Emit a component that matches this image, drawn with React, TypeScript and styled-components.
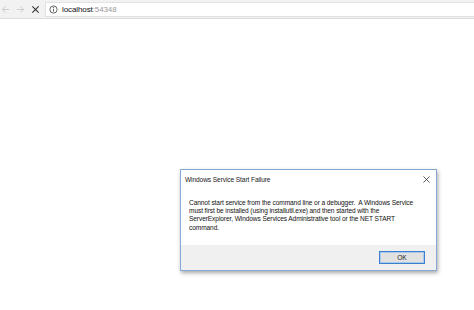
import React from "react";
import styled, { createGlobalStyle } from "styled-components";

const GlobalStyle = createGlobalStyle`
  html, body {
    margin: 0;
    padding: 0;
    background: #ffffff;
  }
  body {
    font-family: "Liberation Sans", Arial, sans-serif;
    width: 474px;
    height: 310px;
    overflow: hidden;
  }
`;

const Page = styled.div`
  display: flex;
  flex-direction: column;
  width: 474px;
  height: 310px;
  background: #fff;
`;

const Toolbar = styled.div`
  display: flex;
  align-items: center;
  height: 17px;
  padding-top: 1px;
  background: #f2f2f2;
  border-bottom: 1px solid #dcdcdc;
`;

const NavGroup = styled.div`
  display: flex;
  align-items: center;
  width: 47px;
  margin-left: -2px;
`;

const NavButton = styled.div<{ $dim?: boolean }>`
  width: 15px;
  height: 15px;
  display: flex;
  align-items: center;
  justify-content: center;
  color: ${(p) => (p.$dim ? "#c8c8c8" : "#333")};
`;

const AddressBar = styled.div`
  flex: 1;
  display: flex;
  align-items: center;
  gap: 4px;
  height: 13px;
  padding-left: 3px;
  background: #fff;
  border: 1px solid #e2e2e2;
  border-right: none;
`;

const Host = styled.span`
  font-family: "Liberation Sans", Arial, sans-serif;
  font-size: 8px;
  color: #111;
  letter-spacing: -0.1px;
`;

const Port = styled.span`
  color: #9a9a9a;
`;

const Stage = styled.div`
  flex: 1;
  display: flex;
  align-items: flex-start;
  padding: 150px 0 0 180px;
`;

const Dialog = styled.div`
  width: 255px;
  display: flex;
  flex-direction: column;
  background: #fff;
  border: 1px solid #86a9d6;
  box-shadow: 1px 2px 4px rgba(0, 0, 0, 0.35);
`;

const TitleBar = styled.div`
  display: flex;
  align-items: center;
  justify-content: space-between;
  height: 16px;
  padding: 1px 6px 0 4px;
`;

const Title = styled.span`
  font-size: 6.6px;
  letter-spacing: -0.1px;
  color: #1a1a1a;
`;

const CloseGlyph = styled.div`
  width: 8px;
  height: 8px;
  display: flex;
  align-items: center;
  justify-content: center;
`;

const Body = styled.div`
  display: flex;
  flex-direction: column;
  padding: 12px 8px 13px 8px;
  height: 33px;
`;

const Line = styled.div`
  font-size: 6.6px;
  line-height: 8.2px;
  letter-spacing: -0.1px;
  color: #111;
  white-space: pre;
`;

const Footer = styled.div`
  display: flex;
  justify-content: flex-end;
  align-items: center;
  height: 25px;
  padding-right: 11px;
  background: #f0f0f0;
`;

const OkButton = styled.button`
  width: 46px;
  height: 13px;
  padding: 0;
  font-family: "Liberation Sans", Arial, sans-serif;
  font-size: 6.6px;
  color: #222;
  background: #e1e1e1;
  border: 1px solid #3c7fcf;
  box-shadow: inset 0 0 0 1px #a9c8ee;
`;

const lines = [
  "Cannot start service from the command line or a debugger.  A Windows Service",
  "must first be installed (using installutil.exe) and then started with the",
  "ServerExplorer, Windows Services Administrative tool or the NET START",
  "command.",
];

export default function App() {
  return (
    <>
      <GlobalStyle />
      <Page>
        <Toolbar>
          <NavGroup>
            <NavButton $dim>
              <svg width="9" height="9" viewBox="0 0 10 10" fill="none" stroke="currentColor" strokeWidth="1">
                <path d="M9 5H1.5M5 1.5L1.5 5 5 8.5" />
              </svg>
            </NavButton>
            <NavButton $dim>
              <svg width="9" height="9" viewBox="0 0 10 10" fill="none" stroke="currentColor" strokeWidth="1">
                <path d="M1 5h7.5M5 1.5L8.5 5 5 8.5" />
              </svg>
            </NavButton>
            <NavButton>
              <svg width="9" height="9" viewBox="0 0 10 10" fill="none" stroke="currentColor" strokeWidth="1.2">
                <path d="M1.5 1.5l7 7M8.5 1.5l-7 7" />
              </svg>
            </NavButton>
          </NavGroup>
          <AddressBar>
            <svg width="9" height="9" viewBox="0 0 10 10" fill="none" stroke="#444" strokeWidth="0.9">
              <circle cx="5" cy="5" r="4" />
              <path d="M5 4.3v3" />
              <circle cx="5" cy="2.9" r="0.35" fill="#444" />
            </svg>
            <Host>
              localhost<Port>:54348</Port>
            </Host>
          </AddressBar>
        </Toolbar>
        <Stage>
          <Dialog>
            <TitleBar>
              <Title>Windows Service Start Failure</Title>
              <CloseGlyph>
                <svg width="7" height="7" viewBox="0 0 8 8" fill="none" stroke="#333" strokeWidth="0.9">
                  <path d="M0.5 0.5l7 7M7.5 0.5l-7 7" />
                </svg>
              </CloseGlyph>
            </TitleBar>
            <Body>
              {lines.map((l) => (
                <Line key={l}>{l}</Line>
              ))}
            </Body>
            <Footer>
              <OkButton>OK</OkButton>
            </Footer>
          </Dialog>
        </Stage>
      </Page>
    </>
  );
}
